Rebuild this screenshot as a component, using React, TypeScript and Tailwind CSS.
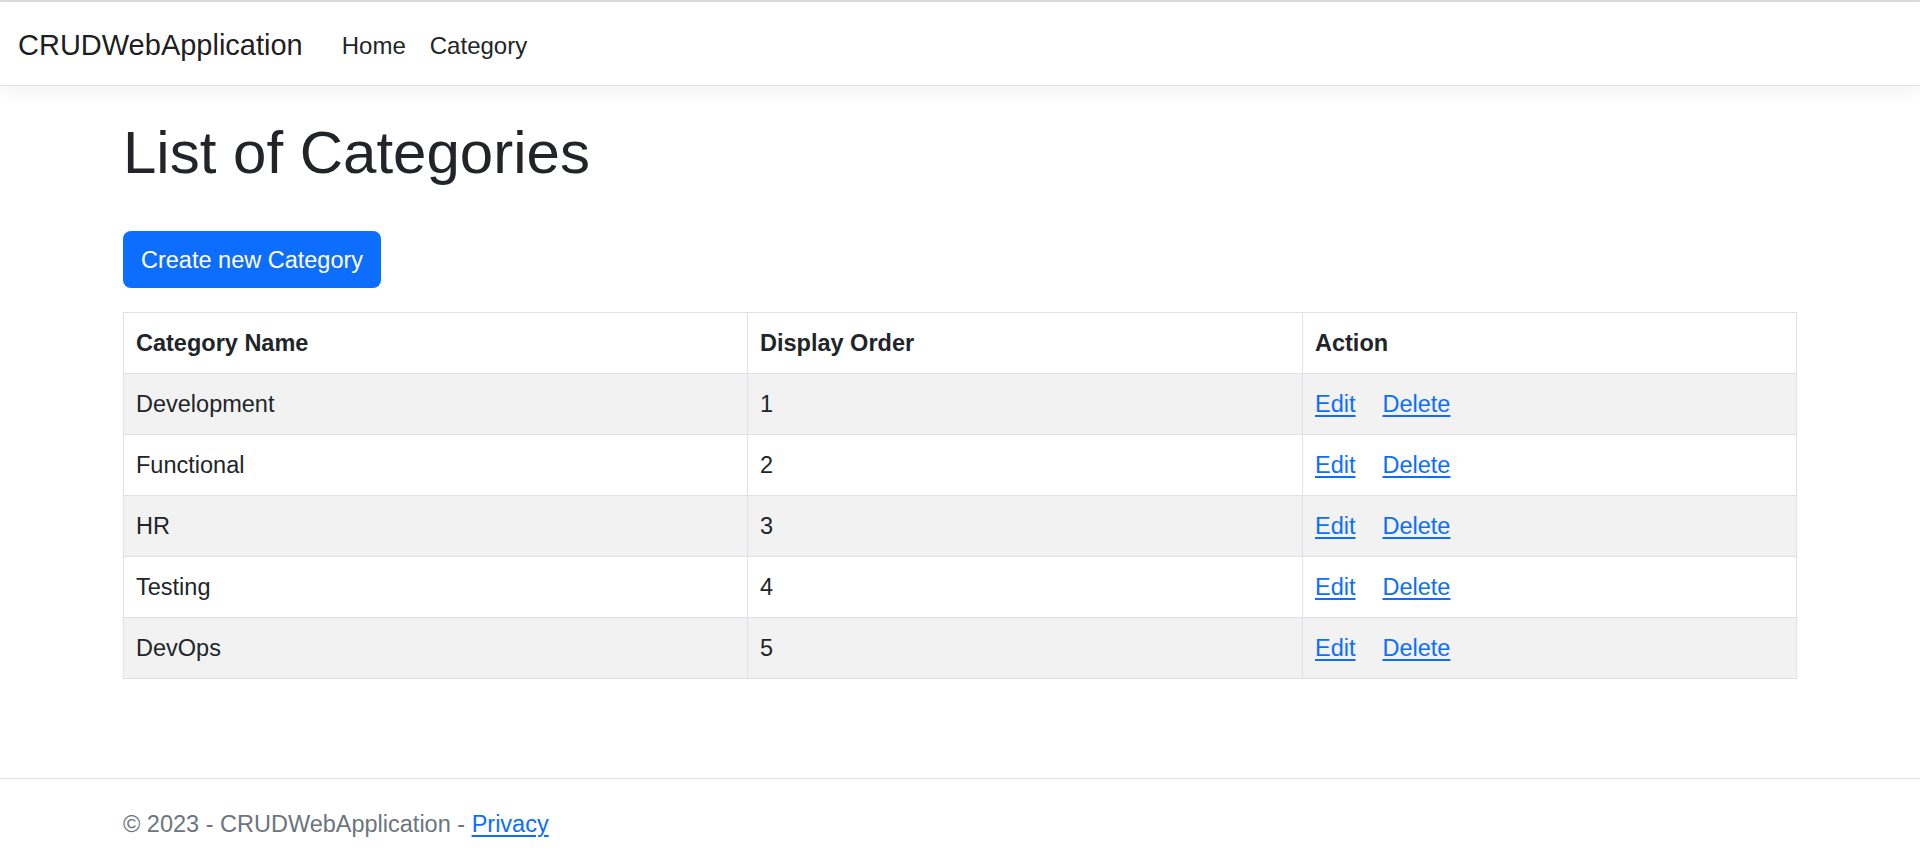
import React from 'react'

type Category = {
    name: string
    order: number
}

const categories: Category[] = [
    { name: 'Development', order: 1 },
    { name: 'Functional', order: 2 },
    { name: 'HR', order: 3 },
    { name: 'Testing', order: 4 },
    { name: 'DevOps', order: 5 },
]

const Navbar = () => {
    return (
        <header className="h-[84px] bg-white border-b border-[#dee2e6] shadow-[0_6px_18px_rgba(0,0,0,0.05)] flex items-center px-[18px] pt-[4px]">
            <a href="#" className="text-[29px] leading-[45px] text-[rgba(0,0,0,0.9)] mr-[27px]">CRUDWebApplication</a>
            <nav className="flex items-center">
                <a href="#" className="px-[12px] text-[24px] leading-[36px] text-[#212529]">Home</a>
                <a href="#" className="px-[12px] text-[24px] leading-[36px] text-[#212529]">Category</a>
            </nav>
        </header>
    )
}

const CategoryTable = () => {
    return (
        <table className="w-full mt-[24px] border-collapse border border-[#dee2e6] text-[23.5px] leading-[36px]">
            <thead>
                <tr>
                    <th className="w-[624px] border border-[#dee2e6] px-[12px] py-[12px] text-left font-bold">Category Name</th>
                    <th className="w-[555px] border border-[#dee2e6] px-[12px] py-[12px] text-left font-bold">Display Order</th>
                    <th className="border border-[#dee2e6] px-[12px] py-[12px] text-left font-bold">Action</th>
                </tr>
            </thead>
            <tbody>
                {categories.map((cat, index) => (
                    <tr key={cat.name} className={index % 2 === 0 ? 'bg-[#f2f2f2]' : 'bg-white'}>
                        <td className="border border-[#dee2e6] px-[12px] py-[12px]">{cat.name}</td>
                        <td className="border border-[#dee2e6] px-[12px] py-[12px]">{cat.order}</td>
                        <td className="border border-[#dee2e6] px-[12px] py-[12px]">
                            <a href="#" className="text-[#0d6efd] underline decoration-[1.5px] underline-offset-[3px] mr-[27px]">Edit</a>
                            <a href="#" className="text-[#0d6efd] underline decoration-[1.5px] underline-offset-[3px]">Delete</a>
                        </td>
                    </tr>
                ))}
            </tbody>
        </table>
    )
}

const App = () => {
    return (
        <div className="min-h-[862px] bg-white text-[#212529] font-['Liberation_Sans',Arial,sans-serif]">
            <div className="h-[2px] bg-[#dcdcdc]" />
            <Navbar />

            <main className="w-[1674px] mx-auto">
                <h1 className="mt-[31px] text-[60px] leading-[72px] font-normal">List of Categories</h1>

                <button className="mt-[42px] h-[57px] px-[18px] rounded-[8px] bg-[#0d6efd] text-white text-[23.5px] leading-[36px]">
                    Create new Category
                </button>

                <CategoryTable />
            </main>

            {/* Footer */}
            <footer className="mt-[99px] border-t border-[#dee2e6]">
                <div className="w-[1674px] mx-auto text-[23.5px] leading-[90px] text-[#6c757d] whitespace-nowrap">
                    © 2023 - CRUDWebApplication - <a href="#" className="text-[#0d6efd] underline decoration-[1.5px] underline-offset-[3px]">Privacy</a>
                </div>
            </footer>
        </div>
    )
}

export default App
